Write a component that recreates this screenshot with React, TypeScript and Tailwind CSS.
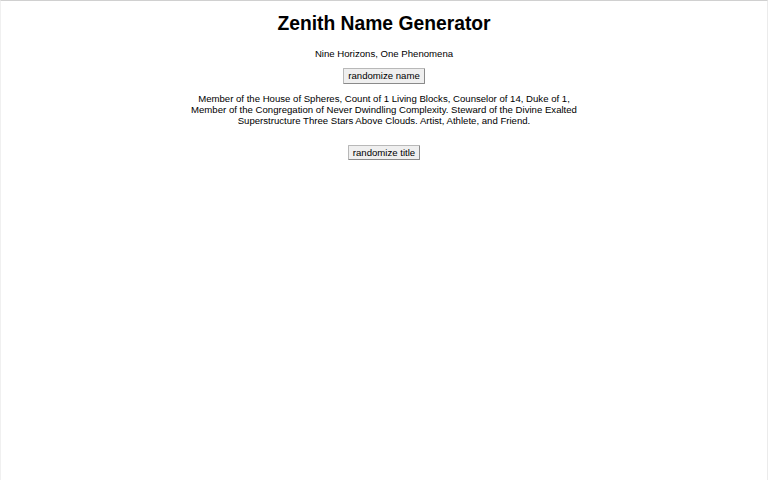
export default function App() {
  return (
    <div className="w-[768px] h-[480px] bg-white border-t border-t-[#d0d0d0] border-l border-l-[#f0f0f0] border-r border-r-[#ebebeb] overflow-hidden text-black" style={{ fontFamily: '"Liberation Sans", Arial, sans-serif' }}>
      <div className="flex flex-col items-center text-center">
        <h1 className="mt-[11px] text-[19.3px] leading-[23px] font-bold">Zenith Name Generator</h1>
        <p className="mt-[13px] text-[9.6px] leading-[12px]">Nine Horizons, One Phenomena</p>
        <button className="mt-[8px] h-[16px] px-[4px] text-[9.6px] leading-[12px] bg-[#efefef] border border-[#8a8a8a] border-t-[#b8b8b8] border-l-[#b8b8b8] rounded-[1px]">randomize name</button>
        <p className="mt-[9px] w-[392px] text-[9.6px] leading-[11px]">
          Member of the House of Spheres, Count of 1 Living Blocks, Counselor of 14, Duke of 1, Member of the Congregation of Never Dwindling Complexity. Steward of the Divine Exalted Superstructure Three Stars Above Clouds. Artist, Athlete, and Friend.
        </p>
        <button className="mt-[19px] h-[15px] px-[4px] text-[9.6px] leading-[12px] bg-[#efefef] border border-[#8a8a8a] border-t-[#b8b8b8] border-l-[#b8b8b8] rounded-[1px]">randomize title</button>
      </div>
    </div>
  );
}
